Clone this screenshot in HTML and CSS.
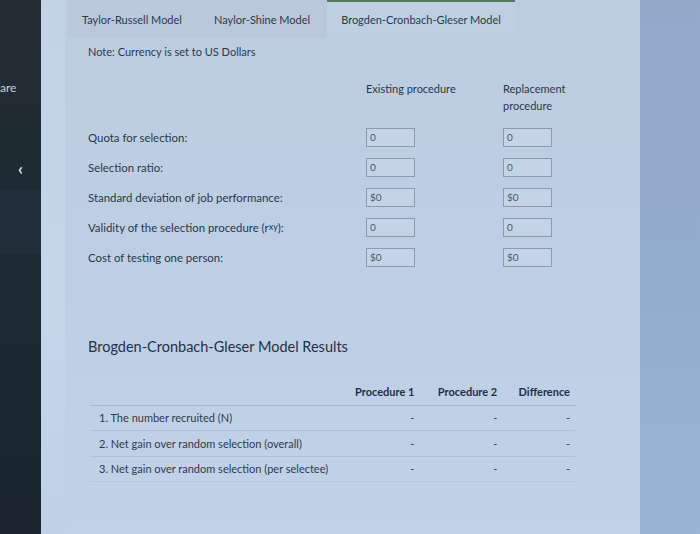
FILE: index.html
```html
<!DOCTYPE html>
<html>
<head>
<meta charset="utf-8">
<link rel="stylesheet" href="styles.css">
</head>
<body>
<div class="screen">
  <aside class="sidebar">
    <div class="side-item">are</div>
    <div class="side-back">&lsaquo;</div>
    <div class="side-band"></div>
  </aside>
  <div class="gutter"></div>
  <main class="main">
    <nav class="tabs">
      <div class="tab">Taylor-Russell Model</div>
      <div class="tab">Naylor-Shine Model</div>
      <div class="tab active">Brogden-Cronbach-Gleser Model</div>
    </nav>
    <section class="content">
      <p class="note">Note: Currency is set to US Dollars</p>
      <div class="form">
        <div class="head-spacer"></div>
        <div class="col-head">Existing procedure</div>
        <div class="col-head">Replacement<br>procedure</div>

        <div class="label">Quota for selection:</div>
        <div class="cell"><div class="input">0</div></div>
        <div class="cell"><div class="input">0</div></div>

        <div class="label">Selection ratio:</div>
        <div class="cell"><div class="input">0</div></div>
        <div class="cell"><div class="input">0</div></div>

        <div class="label">Standard deviation of job performance:</div>
        <div class="cell"><div class="input">$0</div></div>
        <div class="cell"><div class="input">$0</div></div>

        <div class="label">Validity of the selection procedure (r<sub>xy</sub>):</div>
        <div class="cell"><div class="input">0</div></div>
        <div class="cell"><div class="input">0</div></div>

        <div class="label">Cost of testing one person:</div>
        <div class="cell"><div class="input">$0</div></div>
        <div class="cell"><div class="input">$0</div></div>
      </div>

      <h2 class="results-title">Brogden-Cronbach-Gleser Model Results</h2>

      <table class="results">
        <thead>
          <tr>
            <th class="c-label"></th>
            <th class="c-num c1">Procedure 1</th>
            <th class="c-num c2">Procedure 2</th>
            <th class="c-num c3">Difference</th>
          </tr>
        </thead>
        <tbody>
          <tr>
            <td class="c-label">1. The number recruited (N)</td>
            <td class="c-num">-</td><td class="c-num">-</td><td class="c-num">-</td>
          </tr>
          <tr>
            <td class="c-label">2. Net gain over random selection (overall)</td>
            <td class="c-num">-</td><td class="c-num">-</td><td class="c-num">-</td>
          </tr>
          <tr>
            <td class="c-label">3. Net gain over random selection (per selectee)</td>
            <td class="c-num">-</td><td class="c-num">-</td><td class="c-num">-</td>
          </tr>
        </tbody>
      </table>
    </section>
  </main>
  <div class="right-pane"></div>
</div>
</body>
</html>
```

FILE: styles.css
```css
* { box-sizing: border-box; }
html, body { margin: 0; padding: 0; }
body {
  width: 700px;
  height: 534px;
  overflow: hidden;
  font-family: "Lato", "Open Sans", sans-serif;
  color: #2b3848;
  background: #bccee3;
}
.screen {
  display: flex;
  width: 700px;
  height: 534px;
}
.sidebar {
  width: 41px;
  flex: none;
  background: linear-gradient(180deg, #222c33 0%, #1e2a33 40%, #1a2530 100%);
  display: flex;
  flex-direction: column;
}
.side-item {
  margin-top: 80px;
  color: #c9d2dc;
  font-size: 12px;
  line-height: 16px;
}
.side-back {
  margin-top: 66px;
  margin-left: 18px;
  color: #d8dfe7;
  font-size: 17px;
  line-height: 14px;
  font-weight: bold;
}
.side-band {
  margin-top: 14px;
  height: 64px;
  background: #222f3a;
}
.gutter {
  width: 24px;
  flex: none;
  background: linear-gradient(180deg, #c2d3e6 0%, #c4d6ea 60%, #bfd1e6 100%);
}
.main {
  width: 575px;
  flex: none;
  background: linear-gradient(180deg, #bccde1 0%, #bdcfe4 50%, #bfd2e7 100%);
  display: flex;
  flex-direction: column;
}
.right-pane {
  flex: 1;
  background: linear-gradient(180deg, #92a9ca 0%, #93abcd 50%, #9bb4d6 100%);
}
.tabs {
  display: flex;
  height: 38px;
  padding-left: 3px;
}
.tab {
  height: 38px;
  display: flex;
  align-items: center;
  padding: 0 15px 0 14px;
  font-size: 11px;
  color: #2d3a4b;
  background: #b9c8db;
}
.tab:nth-child(2) { padding: 0 17px 0 17px; }
.tab.active {
  background: #bccfe3;
  border-top: 2px solid #4f7a5c;
  padding: 0 14px 2px 14px;
}
.content {
  padding-left: 23px;
}
.note {
  margin: 7px 0 0 0;
  font-size: 11px;
  line-height: 14px;
  color: #2d3a4b;
}
.form {
  display: grid;
  grid-template-columns: 278px 137px 90px;
  grid-template-rows: 42px;
  grid-auto-rows: 30px;
  margin-top: 21px;
}
.head-spacer { grid-row: 1; }
.col-head {
  grid-row: 1;
  font-size: 11px;
  line-height: 17px;
  align-self: start;
}
.label {
  font-size: 11.4px;
  display: flex;
  align-items: center;
  color: #2b3848;
}
.label sub {
  font-size: 9px;
  vertical-align: -3px;
  line-height: 0;
}
.cell {
  display: flex;
  align-items: center;
}
.input {
  width: 49px;
  height: 19px;
  border: 1px solid #8c9cb0;
  background: #c4d4e6;
  font-size: 10px;
  line-height: 17px;
  padding-left: 3px;
  color: #4a586a;
}
.results-title {
  margin: 65px 0 0 0;
  font-size: 14.5px;
  font-weight: normal;
  line-height: 20px;
  color: #253243;
}
.results {
  margin-top: 26px;
  margin-left: 2px;
  border-collapse: collapse;
  width: 485px;
  font-size: 11px;
}
.results th {
  font-weight: bold;
  height: 22px;
  padding: 0 4px 4px 0;
  vertical-align: middle;
  border-bottom: 1px solid #a9b9cc;
  color: #233044;
}
.results td {
  height: 25.5px;
  padding: 0;
  border-bottom: 1px solid #b1c1d4;
  color: #2f3b4c;
}
.results tbody tr:last-child td { border-bottom: 1px solid #b8c8db; }
.c-label { text-align: left; padding-left: 9px !important; width: 255px; }
.c-num { text-align: right; padding-right: 5px !important; color: #4d5a6b; }
.c1 { width: 71px; }
.c2 { width: 82px; }
.c3 { width: 72px; }
```
